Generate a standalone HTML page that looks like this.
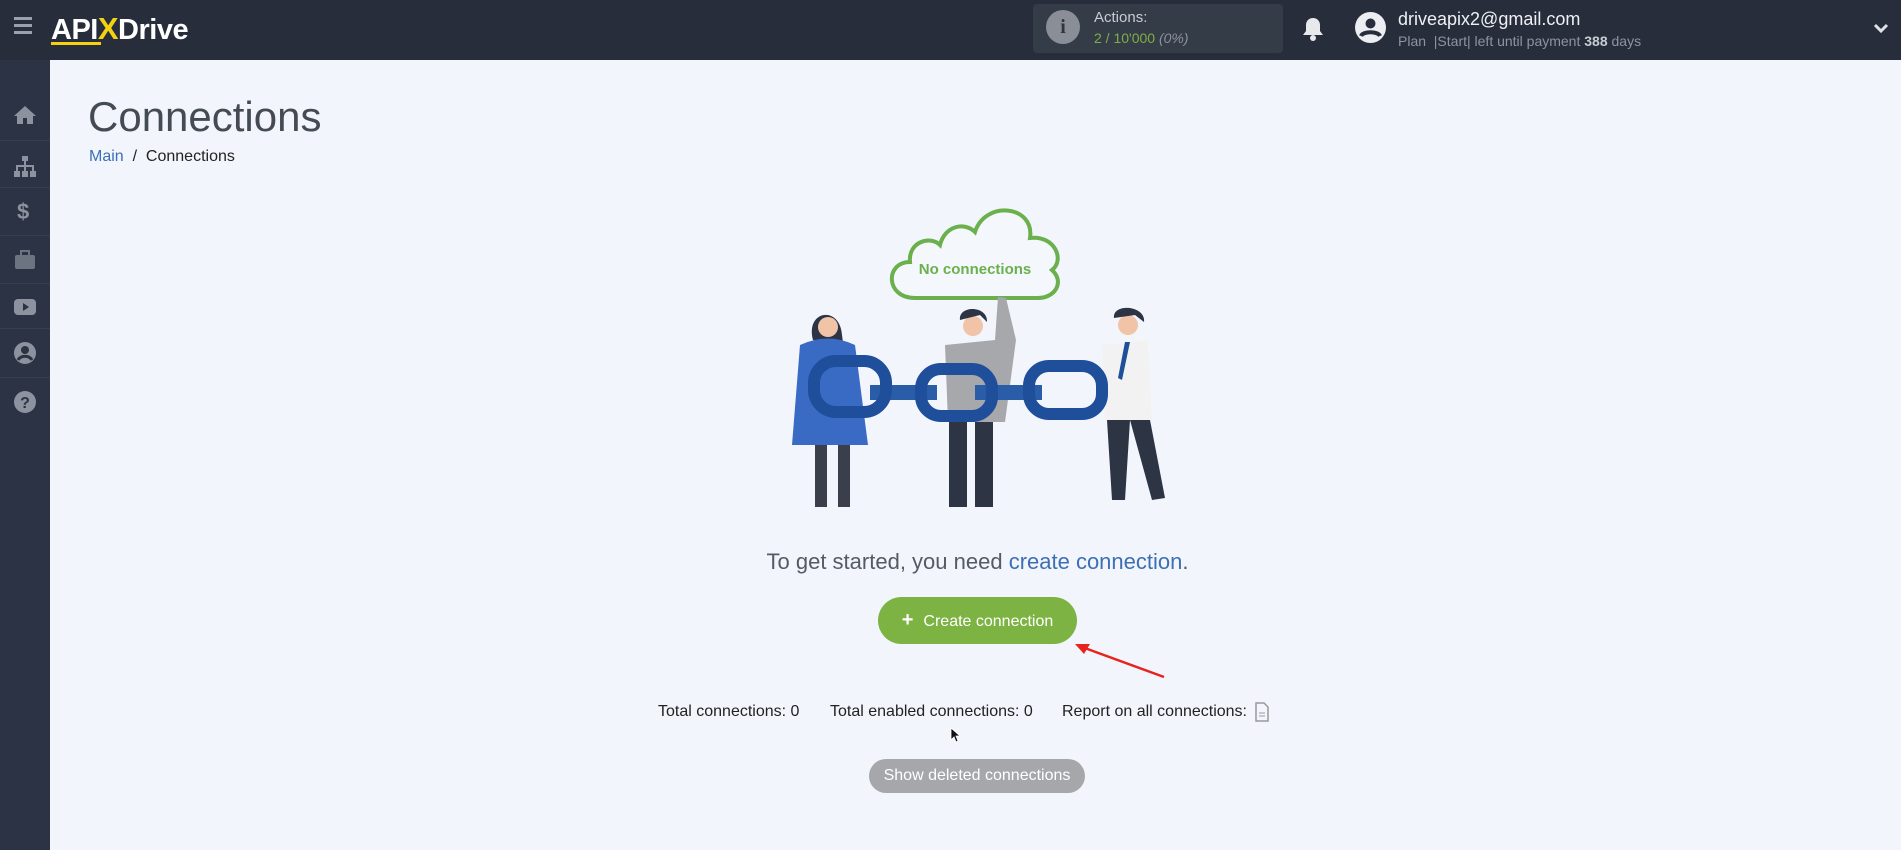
<!DOCTYPE html>
<html><head><meta charset="utf-8"><style>
*{margin:0;padding:0;box-sizing:border-box}
body{width:1901px;height:850px;overflow:hidden;background:#f2f6fc;font-family:"Liberation Sans",sans-serif;position:relative}
.hdr{position:absolute;left:0;top:0;width:1901px;height:60px;background:#272d3b}
.side{position:absolute;left:0;top:60px;width:50px;height:790px;background:#2b3344}
.sep{position:absolute;left:0;width:50px;height:1px;background:#363f52}
.ic{position:absolute;left:13px;width:24px;height:24px}
.abs{position:absolute;white-space:nowrap}
</style></head><body>
<div class="hdr">
  <div class="abs" style="left:14px;top:17px">
    <div style="width:18px;height:3px;background:#9aa1ad;margin-bottom:4px"></div>
    <div style="width:18px;height:3px;background:#9aa1ad;margin-bottom:4px"></div>
    <div style="width:18px;height:3px;background:#9aa1ad"></div>
  </div>
  <div class="abs" style="left:51px;top:11px;font-size:29px;font-weight:bold;color:#fff;letter-spacing:-0.5px">API<span style="color:#f3d211;font-size:31px">X</span>Drive</div>
  <div class="abs" style="left:51px;top:42px;width:50px;height:3px;background:#f3d211"></div>
  <div class="abs" style="left:1033px;top:4px;width:250px;height:49px;background:#343c48;border-radius:4px"></div>
  <div class="abs" style="left:1046px;top:10px;width:34px;height:34px;border-radius:50%;background:#8a8f97;color:#2f3540;font-weight:bold;font-size:20px;text-align:center;line-height:34px;font-family:'Liberation Serif',serif">i</div>
  <div class="abs" style="left:1094px;top:9px;font-size:15px;color:#c9ccd2">Actions:</div>
  <div class="abs" style="left:1094px;top:30px;font-size:14px;color:#7fae46">2 / 10'000 <i style="color:#8d939c">(0%)</i></div>
  <svg class="abs" style="left:1301px;top:16px" width="24" height="26" viewBox="0 0 24 26"><path d="M12 2c-4 0-7 3-7 7v6l-3 4h20l-3-4V9c0-4-3-7-7-7z" fill="#e8e9ec"/><circle cx="12" cy="22" r="3" fill="#e8e9ec"/></svg>
  <svg class="abs" style="left:1354px;top:11px" width="33" height="33" viewBox="0 0 33 33"><circle cx="16.5" cy="16.5" r="15.5" fill="#eceef1"/><circle cx="16.5" cy="12.5" r="5" fill="#272d3b"/><path d="M7 25c2-5 17-5 19 0" stroke="#272d3b" stroke-width="4" fill="none"/></svg>
  <div class="abs" style="left:1398px;top:9px;font-size:18px;color:#eef0f3">driveapix2@gmail.com</div>
  <div class="abs" style="left:1398px;top:33px;font-size:14px;color:#8e949e">Plan &nbsp;|Start| left until payment <b style="color:#c8ccd2">388</b> days</div>
  <svg class="abs" style="left:1873px;top:22px" width="16" height="12" viewBox="0 0 16 12"><path d="M2 3l6 6 6-6" stroke="#e0e2e6" stroke-width="3" fill="none"/></svg>
</div>
<div class="side">
  <div class="sep" style="top:80px"></div><div class="sep" style="top:127px"></div><div class="sep" style="top:175px"></div><div class="sep" style="top:223px"></div><div class="sep" style="top:268px"></div><div class="sep" style="top:317px"></div>
  <svg class="ic" style="top:43px" viewBox="0 0 24 24"><path d="M12 3L1 13h3v8h6v-6h4v6h6v-8h3z" fill="#8c939e"/></svg>
  <svg class="ic" style="top:95px" viewBox="0 0 24 24" fill="#8c939e"><rect x="9" y="1" width="6" height="5"/><rect x="11" y="6" width="2" height="5"/><rect x="3" y="10" width="18" height="2"/><rect x="3" y="10" width="2" height="6"/><rect x="19" y="10" width="2" height="6"/><rect x="11" y="10" width="2" height="6"/><rect x="1" y="16" width="6" height="6"/><rect x="9" y="16" width="6" height="6"/><rect x="17" y="16" width="6" height="6"/></svg>
  <div class="abs" style="left:17px;top:139px;font-size:22px;font-weight:bold;color:#8c939e">$</div>
  <svg class="ic" style="top:188px" viewBox="0 0 24 24" fill="#6c7482"><rect x="2" y="7" width="20" height="14" rx="2"/><rect x="8" y="3" width="8" height="5" fill="none" stroke="#6c7482" stroke-width="2"/></svg>
  <svg class="ic" style="top:235px" viewBox="0 0 24 24"><rect x="1" y="4" width="22" height="16" rx="4" fill="#8c939e"/><path d="M10 8v8l6-4z" fill="#2b3344"/></svg>
  <svg class="ic" style="top:281px" viewBox="0 0 24 24"><circle cx="12" cy="12" r="11" fill="#8c939e"/><circle cx="12" cy="9" r="4" fill="#2b3344"/><path d="M5 19c3-5 11-5 14 0" stroke="#2b3344" stroke-width="3" fill="none"/></svg>
  <svg class="ic" style="top:330px" viewBox="0 0 24 24"><circle cx="12" cy="12" r="11" fill="#8c939e"/><text x="12" y="18" text-anchor="middle" font-size="16" font-weight="bold" fill="#2b3344" font-family="Liberation Sans">?</text></svg>
</div>
<div class="abs" style="left:88px;top:93px;font-size:42px;color:#454b53">Connections</div>
<div class="abs" style="left:89px;top:148px;font-size:16px;color:#222"><span style="color:#3d6fb4">Main</span> &nbsp;/&nbsp; Connections</div>

<svg class="abs" style="left:780px;top:200px" width="400" height="320" viewBox="0 0 400 320">
  <path d="M135 98 C105 98 105 62 130 62 C128 42 150 35 160 45 C165 25 185 22 195 32 C205 0 255 5 250 38 C275 35 285 60 272 70 C285 82 275 98 258 98 Z" fill="#f4f8fc" stroke="#6ab04c" stroke-width="4"/>
  <text x="195" y="74" text-anchor="middle" font-size="15" font-weight="bold" fill="#6ab04c" font-family="Liberation Sans">No connections</text>
  <path d="M33 140 C25 110 60 105 62 135 L64 150 Z" fill="#2d3444"/>
  <circle cx="48" cy="127" r="10" fill="#f1c4a8"/>
  <path d="M20 145 Q48 132 75 145 L88 245 L12 245 Z" fill="#3a6bc4"/>
  <rect x="35" y="245" width="12" height="62" fill="#3a3f4b"/><rect x="58" y="245" width="12" height="62" fill="#3a3f4b"/>
  <circle cx="193" cy="126" r="10" fill="#f1c4a8"/>
  <path d="M180 120 C178 105 208 105 207 122 L200 115 Z" fill="#2d3444"/>
  <path d="M165 145 L215 140 L218 97 L226 98 L236 140 L225 222 L168 222 Z" fill="#a6a8ab"/>
  <rect x="169" y="222" width="18" height="85" fill="#2d3444"/><rect x="195" y="222" width="18" height="85" fill="#2d3444"/>
  <circle cx="348" cy="125" r="10" fill="#f1c4a8"/>
  <path d="M334 118 C332 103 366 105 364 122 L355 115 Z" fill="#2d3444"/>
  <path d="M322 145 L368 140 L372 220 L325 220 Z" fill="#f2f2f2"/>
  <path d="M345 142 L350 142 L342 180 L338 178 Z" fill="#1f4e9a"/>
  <path d="M327 220 L350 220 L345 300 L332 300 Z" fill="#2d3444"/><path d="M350 220 L370 220 L385 298 L372 300 Z" fill="#2d3444"/>
  <rect x="90" y="185" width="67" height="15" fill="#2a5da8"/><rect x="195" y="185" width="67" height="15" fill="#2a5da8"/>
  <rect x="34" y="161" width="72" height="51" rx="22" fill="none" stroke="#1f4e9a" stroke-width="12"/>
  <rect x="141" y="169" width="71" height="47" rx="20" fill="none" stroke="#1f4e9a" stroke-width="12"/>
  <rect x="249" y="166" width="73" height="48" rx="20" fill="none" stroke="#1f4e9a" stroke-width="12"/>
</svg>

<div class="abs" style="left:0;width:1955px;text-align:center;top:549px;font-size:22px;color:#555b63">To get started, you need <span style="color:#3d6fb4">create connection</span>.</div>
<div class="abs" style="left:878px;top:597px;width:199px;height:47px;border-radius:24px;background:#7cb342;color:#fff;font-size:16px;text-align:center;line-height:47px"><b style="font-size:20px;margin-right:10px">+</b>Create connection</div>
<svg class="abs" style="left:1070px;top:640px" width="100" height="40" viewBox="0 0 100 40"><path d="M94 37 L12 7" stroke="#e8231e" stroke-width="2.5"/><path d="M5 4 L20 4 L14 14 Z" fill="#e8231e"/></svg>
<div class="abs" style="left:658px;top:703px;font-size:16px;color:#222">Total connections: 0</div>
<div class="abs" style="left:830px;top:703px;font-size:16px;color:#222">Total enabled connections: 0</div>
<div class="abs" style="left:1062px;top:703px;font-size:16px;color:#222">Report on all connections:</div>
<svg class="abs" style="left:1255px;top:702px" width="14" height="20" viewBox="0 0 14 20"><path d="M1 1h8l4 4v14H1z" fill="none" stroke="#999" stroke-width="1.5"/><path d="M4 11h6M4 14h6" stroke="#999"/></svg>
<svg class="abs" style="left:950px;top:727px" width="12" height="16" viewBox="0 0 12 16"><path d="M1 1v12l3-3 2 5 2-1-2-5h4z" fill="#111" stroke="#fff" stroke-width="0.8"/></svg>
<div class="abs" style="left:869px;top:759px;width:216px;height:34px;border-radius:17px;background:#a5a7aa;color:#fff;font-size:16px;text-align:center;line-height:34px">Show deleted connections</div>
</body></html>
